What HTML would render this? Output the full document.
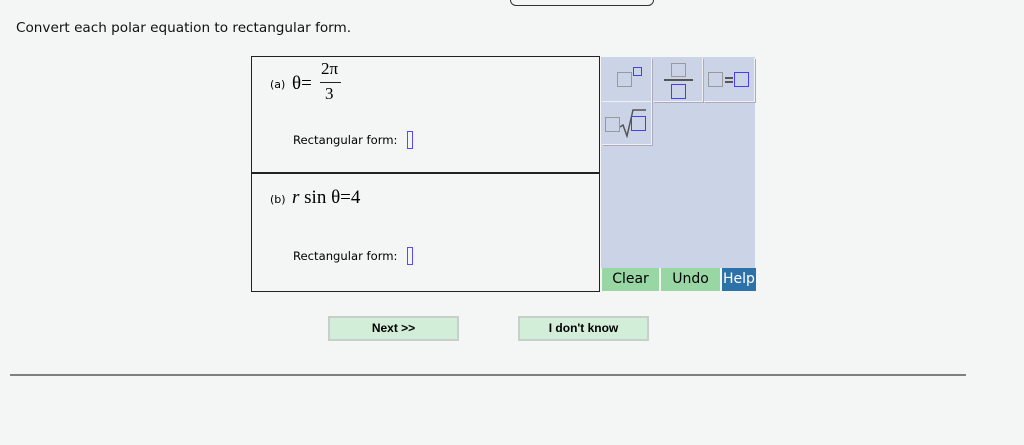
<!DOCTYPE html>
<html><head><style>
body{margin:0;width:1024px;height:445px;background:#f4f5f5;font-family:"DejaVu Sans","Liberation Sans",sans-serif;position:relative;overflow:hidden}
.a{position:absolute}
.sq{position:absolute;box-sizing:border-box;border:1.5px solid #999}
.bl{border-color:#4a3cf0}
.pb{position:absolute;background:#cad4e6;border-right:1px solid #eef0f4;border-bottom:1px solid #eef0f4;box-sizing:border-box;box-shadow:1px 1px 0 #aab}
.m{font-family:"Liberation Serif",serif;font-size:19px}
.btn{position:absolute;background:#d2edd8;border:2px solid #c8cfca;box-sizing:border-box;font-family:"Liberation Sans",sans-serif;font-weight:bold;font-size:12px;text-align:center;line-height:20px}
.gb{position:absolute;background:#98d7a4;font-size:14px;text-align:center;line-height:23px;top:268px;height:23px}
</style></head><body>
<div class="a" style="left:510px;top:-10px;width:144px;height:16px;border:1.5px solid #333;border-radius:6px;box-sizing:border-box"></div>
<div class="a" style="left:16px;top:20px;font-size:13.6px;color:#111">Convert each polar equation to rectangular form.</div>
<div class="a" style="left:251px;top:56px;width:349px;height:236px;border:1.5px solid #222;box-sizing:border-box"></div>
<div class="a" style="left:251px;top:172px;width:349px;height:2px;background:#222"></div>
<div class="a" style="left:270px;top:78px;font-size:11px">(a)</div>
<div class="a m" style="left:292px;top:73px">θ=</div>
<div class="a m" style="left:321px;top:59px;font-size:17px">2π</div>
<div class="a" style="left:320px;top:82px;width:21px;height:1px;background:#222"></div>
<div class="a m" style="left:325px;top:84px;font-size:17px">3</div>
<div class="a" style="left:293px;top:133px;font-size:11.6px">Rectangular form:</div>
<div class="a" style="left:407px;top:131px;width:6px;height:18px;border:1.5px solid #5a4af5;box-sizing:border-box"></div>
<div class="a" style="left:270px;top:193px;font-size:11px">(b)</div>
<div class="a m" style="left:292px;top:187px"><i>r</i> sin θ=4</div>
<div class="a" style="left:293px;top:249px;font-size:11.6px">Rectangular form:</div>
<div class="a" style="left:407px;top:247px;width:6px;height:18px;border:1.5px solid #5a4af5;box-sizing:border-box"></div>
<div class="a" style="left:601px;top:57px;width:154px;height:211px;background:#cad4e6"></div>
<div class="pb" style="left:602px;top:58px;width:50px;height:44px"><div class="sq" style="left:15px;top:14px;width:15px;height:15px"></div><div class="sq bl" style="left:31px;top:9px;width:9px;height:9px"></div></div>
<div class="pb" style="left:653px;top:58px;width:50px;height:44px"><div class="sq" style="left:18px;top:5px;width:15px;height:14px"></div><div class="a" style="left:11px;top:21px;width:29px;height:2px;background:#555"></div><div class="sq bl" style="left:18px;top:26px;width:15px;height:15px"></div></div>
<div class="pb" style="left:704px;top:58px;width:51px;height:44px"><div class="sq" style="left:4px;top:14px;width:15px;height:15px"></div><div class="a" style="left:21px;top:19px;width:8px;height:2px;background:#555"></div><div class="a" style="left:21px;top:23px;width:8px;height:2px;background:#555"></div><div class="sq bl" style="left:30px;top:14px;width:15px;height:15px"></div></div>
<div class="pb" style="left:602px;top:102px;width:50px;height:43px"><div class="sq" style="left:3px;top:15px;width:15px;height:15px"></div>
<svg class="a" style="left:18px;top:6px" width="30" height="30"><path d="M0 19 L3 17 L7 28 L13 2 L26 2" stroke="#555" stroke-width="1.5" fill="none"/></svg><div class="sq bl" style="left:29px;top:14px;width:15px;height:15px"></div></div>
<div class="gb" style="left:602px;width:57px">Clear</div>
<div class="gb" style="left:661px;width:59px">Undo</div>
<div class="gb" style="left:722px;width:34px;background:#2c72a8;color:#fff">Help</div>
<div class="btn" style="left:328px;top:316px;width:131px;height:25px">Next &gt;&gt;</div>
<div class="btn" style="left:518px;top:316px;width:131px;height:25px">I don't know</div>
<div class="a" style="left:10px;top:374px;width:956px;height:2px;background:#808080"></div>
</body></html>
